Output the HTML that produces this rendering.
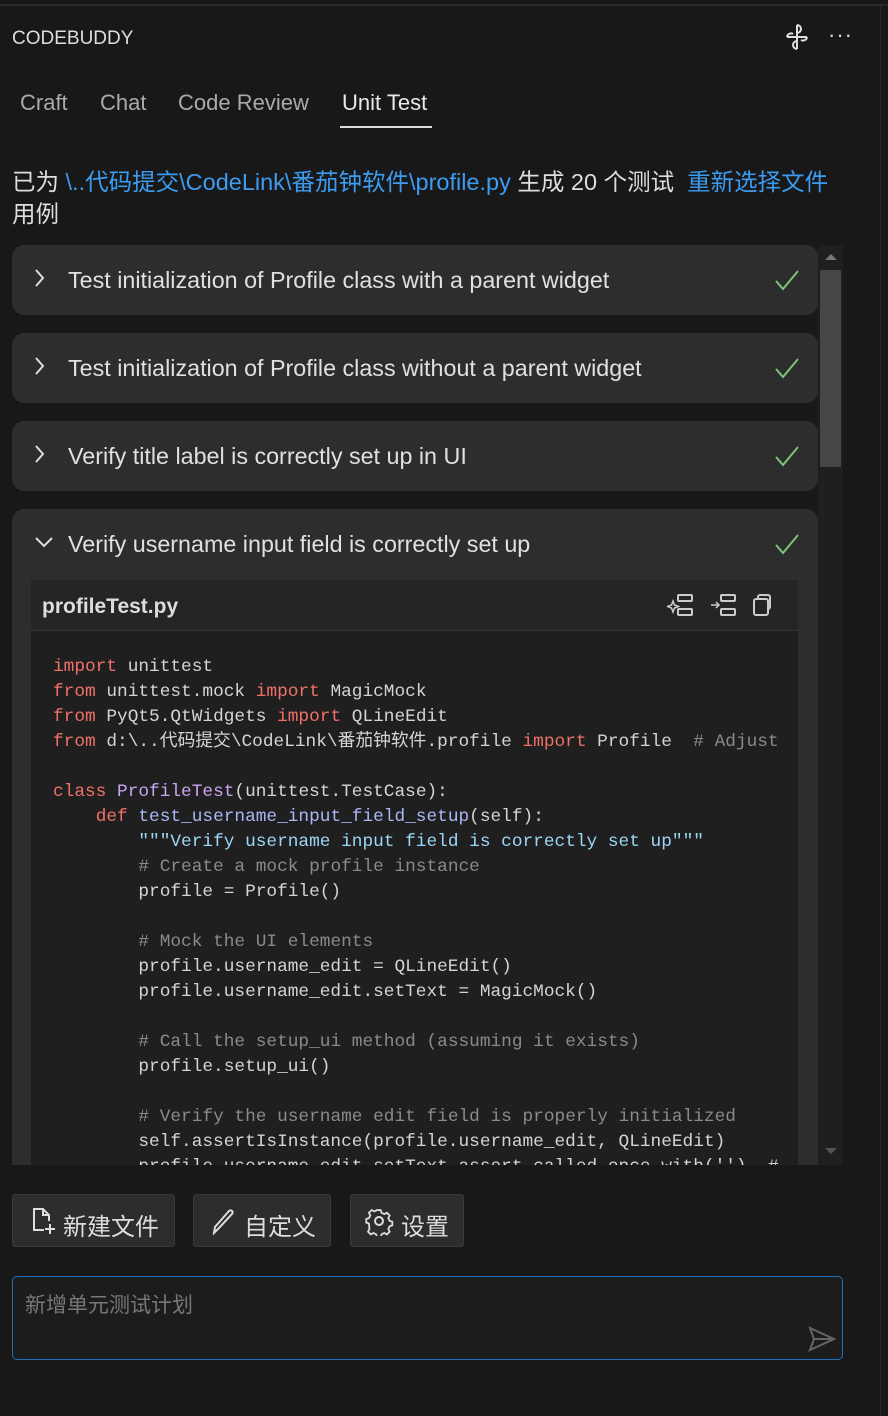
<!DOCTYPE html>
<html><head><meta charset="utf-8"><style>
body{margin:0;width:888px;height:1416px;background:#181818;font-family:"Liberation Sans","Noto Sans CJK SC",sans-serif;color:#ccc;position:relative;overflow:hidden}
.abs{position:absolute}
.card{position:absolute;left:12px;width:806px;height:70px;background:#2d2d2d;border-radius:12px}
.card .t{position:absolute;left:56px;top:22px;font-size:23.3px;color:#e0e0e0;white-space:nowrap}
.card svg.c{position:absolute;left:20px;top:22px}
.card svg.k{position:absolute;left:762px;top:24px}
pre{margin:0;font-family:"Liberation Mono","Noto Sans CJK SC",monospace;font-size:17.8px;line-height:25px;color:#d4d4d4}
.kw{color:#f07167}.cl{color:#c9a5f0}.fn{color:#a9b7f5}.st{color:#9cd5f5}.cm{color:#8a8a8a}
.btn{position:absolute;top:1194px;height:53px;background:#2d2d2d;border:1px solid #3a3a3a;border-radius:3px;font-size:24px;color:#ddd;box-sizing:border-box}
</style></head><body>
<div class="abs" style="left:0;top:4px;width:888px;height:2px;background:#2a2a2a"></div>
<div class="abs" style="left:880px;top:6px;width:1px;height:1410px;background:#2a2a2a"></div>
<div class="abs" style="left:12px;top:28px;font-size:19px;color:#ddd">CODEBUDDY</div>
<svg class="abs" style="left:783px;top:22px" width="28" height="30" viewBox="0 0 28 30" fill="none" stroke="#ddd" stroke-width="2"><path d="M14 3v24M4 15h20M14 3a4 4 0 0 1 0 8M14 27a4 4 0 0 1 0-8M4 15a4 4 0 0 1 6-3M24 15a4 4 0 0 1-6 3"/></svg>
<div class="abs" style="left:828px;top:22px;font-size:22px;color:#ddd;letter-spacing:1px">···</div>
<div class="abs" style="left:20px;top:90px;font-size:22px;color:#aaa">Craft</div>
<div class="abs" style="left:100px;top:90px;font-size:22px;color:#aaa">Chat</div>
<div class="abs" style="left:178px;top:90px;font-size:22px;color:#aaa">Code Review</div>
<div class="abs" style="left:342px;top:90px;font-size:22px;color:#e8e8e8">Unit Test</div>
<div class="abs" style="left:340px;top:126px;width:92px;height:2px;background:#ddd"></div>
<div class="abs" style="left:12px;top:166px;font-size:23.5px;line-height:32px;color:#ddd;width:860px">已为 <span style="color:#3b9cf0">\..代码提交\CodeLink\番茄钟软件\profile.py</span> 生成 20 个测试 &nbsp;<span style="color:#3b9cf0">重新选择文件</span><br>用例</div>

<div class="card" style="top:245px"><svg class="c" width="14" height="22"><path d="M4 3l7 8-7 8" stroke="#ddd" stroke-width="2" fill="none"/></svg><div class="t">Test initialization of Profile class with a parent widget</div><svg class="k" width="26" height="22"><path d="M2 12l7 8L24 2" stroke="#7cc57e" stroke-width="2" fill="none"/></svg></div>
<div class="card" style="top:333px"><svg class="c" width="14" height="22"><path d="M4 3l7 8-7 8" stroke="#ddd" stroke-width="2" fill="none"/></svg><div class="t">Test initialization of Profile class without a parent widget</div><svg class="k" width="26" height="22"><path d="M2 12l7 8L24 2" stroke="#7cc57e" stroke-width="2" fill="none"/></svg></div>
<div class="card" style="top:421px"><svg class="c" width="14" height="22"><path d="M4 3l7 8-7 8" stroke="#ddd" stroke-width="2" fill="none"/></svg><div class="t">Verify title label is correctly set up in UI</div><svg class="k" width="26" height="22"><path d="M2 12l7 8L24 2" stroke="#7cc57e" stroke-width="2" fill="none"/></svg></div>
<div class="card" style="top:509px;height:700px;border-radius:12px 12px 0 0"><svg class="abs" style="left:22px;top:26px" width="22" height="14"><path d="M2 3l8 8 8-8" stroke="#ddd" stroke-width="2" fill="none"/></svg><div class="t">Verify username input field is correctly set up</div><svg class="k" width="26" height="22"><path d="M2 12l7 8L24 2" stroke="#7cc57e" stroke-width="2" fill="none"/></svg></div>

<div class="abs" style="left:31px;top:580px;width:767px;height:600px;background:#1f1f1f;overflow:hidden">
<div style="height:50px;background:#252525;border-bottom:1px solid #333;position:relative">
<div class="abs" style="left:11px;top:15px;font-size:21px;font-weight:bold;color:#ddd">profileTest.py</div>
<svg class="abs" style="left:636px;top:13px" width="110" height="28" fill="none" stroke="#ccc" stroke-width="2"><rect x="11" y="2" width="14" height="6" rx="1"/><rect x="11" y="16" width="14" height="6" rx="1"/><path d="M6 8l1.5 4 4 1.5-4 1.5L6 19l-1.5-4-4-1.5 4-1.5z" stroke-width="1.5"/><rect x="54" y="2" width="14" height="6" rx="1"/><rect x="54" y="16" width="14" height="6" rx="1"/><path d="M44 12h8M49 9l3 3-3 3" stroke-width="1.5"/><rect x="87" y="6" width="14" height="16" rx="2"/><path d="M91 6V4a2 2 0 0 1 2-2h8a2 2 0 0 1 2 2v10a2 2 0 0 1-2 2h-1"/></svg>
</div>
<pre style="position:absolute;left:22px;top:75px"><span class="kw">import</span> unittest
<span class="kw">from</span> unittest.mock <span class="kw">import</span> MagicMock
<span class="kw">from</span> PyQt5.QtWidgets <span class="kw">import</span> QLineEdit
<span class="kw">from</span> d:\..代码提交\CodeLink\番茄钟软件.profile <span class="kw">import</span> Profile  <span class="cm"># Adjust</span>

<span class="kw">class</span> <span class="cl">ProfileTest</span>(unittest.TestCase):
    <span class="kw">def</span> <span class="fn">test_username_input_field_setup</span>(self):
        <span class="st">"""Verify username input field is correctly set up"""</span>
        <span class="cm"># Create a mock profile instance</span>
        profile = Profile()

        <span class="cm"># Mock the UI elements</span>
        profile.username_edit = QLineEdit()
        profile.username_edit.setText = MagicMock()

        <span class="cm"># Call the setup_ui method (assuming it exists)</span>
        profile.setup_ui()

        <span class="cm"># Verify the username edit field is properly initialized</span>
        self.assertIsInstance(profile.username_edit, QLineEdit)
        profile.username_edit.setText.assert_called_once_with('')  # </pre>
</div>
<div class="abs" style="left:0;top:1165px;width:880px;height:251px;background:#181818"></div>
<div class="abs" style="left:818px;top:245px;width:25px;height:920px;background:#1f1f1f"></div>
<div class="abs" style="left:820px;top:270px;width:21px;height:197px;background:#464646"></div>
<div class="abs" style="left:825px;top:254px;width:0;height:0;border:6px solid transparent;border-bottom-color:#777;border-top:0"></div>
<div class="abs" style="left:825px;top:1148px;width:0;height:0;border:6px solid transparent;border-top-color:#555;border-bottom:0"></div>

<div class="btn" style="left:12px;width:163px"><svg class="abs" style="left:17px;top:12px" width="28" height="28" fill="none" stroke="#ddd" stroke-width="2"><path d="M14 23H4V2h9l6 6v6M13 2v6h6M20 17v10M15 22h10"/></svg><span class="abs" style="left:50px;top:12px">新建文件</span></div>
<div class="btn" style="left:193px;width:138px"><svg class="abs" style="left:16px;top:12px" width="26" height="28" fill="none" stroke="#ddd" stroke-width="2"><path d="M4 26l1-6L19 4a2 2 0 0 1 3 3L8 22z"/></svg><span class="abs" style="left:50px;top:12px">自定义</span></div>
<div class="btn" style="left:350px;width:114px"><svg class="abs" style="left:13px;top:11px" width="30" height="30" fill="none" stroke="#ddd" stroke-width="2"><circle cx="15" cy="15" r="4"/><path d="M13 3h4l1 3 3 1.5 3-1.5 3 3-1.5 3 1.5 3 3 1v4l-3 1-1.5 3 1.5 3-3 3-3-1.5-3 1.5-1 3h-4l-1-3-3-1.5-3 1.5-3-3 1.5-3L4 18l-3-1v-4l3-1 1.5-3L4 6l3-3 3 1.5z" transform="scale(.9) translate(1.5 1.5)"/></svg><span class="abs" style="left:50px;top:12px">设置</span></div>

<div class="abs" style="left:12px;top:1276px;width:831px;height:84px;box-sizing:border-box;border:1px solid #1f6fb5;border-radius:5px;background:#1c1c1c">
<div class="abs" style="left:12px;top:12px;font-size:21px;color:#777">新增单元测试计划</div>
<svg class="abs" style="left:794px;top:48px" width="30" height="28" fill="none" stroke="#666" stroke-width="2"><path d="M3 3l24 11L3 25l4-11zM7 14h20"/></svg>
</div>
</body></html>
